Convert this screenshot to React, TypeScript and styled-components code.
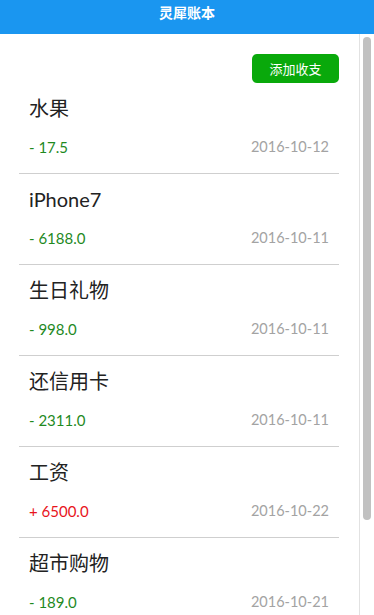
import * as React from 'react';
import styled, { createGlobalStyle } from 'styled-components';

interface IRecord {
    title: string;
    type: 'in' | 'out';
    amount: string;
    date: string;
}

const records: IRecord[] = [
    { title: '水果', type: 'out', amount: '17.5', date: '2016-10-12' },
    { title: 'iPhone7', type: 'out', amount: '6188.0', date: '2016-10-11' },
    { title: '生日礼物', type: 'out', amount: '998.0', date: '2016-10-11' },
    { title: '还信用卡', type: 'out', amount: '2311.0', date: '2016-10-11' },
    { title: '工资', type: 'in', amount: '6500.0', date: '2016-10-22' },
    { title: '超市购物', type: 'out', amount: '189.0', date: '2016-10-21' },
    { title: '房租', type: 'out', amount: '2000.0', date: '2016-10-20' },
];

const GlobalStyle = createGlobalStyle`
    html, body {
        margin: 0;
        padding: 0;
        background: #fff;
    }
    body {
        font-family: Lato, "Noto Sans", "Noto Sans CJK SC", sans-serif;
    }
`;

const Page = styled.div`
    width: 374px;
    height: 615px;
    display: flex;
    flex-direction: column;
    overflow: hidden;
`;

const Header = styled.header`
    height: 34px;
    flex: none;
    background: #1a96f0;
    color: #fff;
    font-family: "Noto Sans CJK SC", sans-serif;
    font-size: 14px;
    font-weight: 700;
    line-height: 24px;
    text-align: center;
    padding-bottom: 10px;
    box-sizing: border-box;
`;

const Body = styled.div`
    flex: 1;
    min-height: 0;
    display: flex;
`;

const Scroller = styled.main`
    flex: 1;
    overflow-y: auto;
    background: #fff;
    scrollbar-width: none;

    &::-webkit-scrollbar {
        display: none;
    }
`;

const ScrollTrack = styled.div`
    width: 8px;
    flex: none;
    border-left: 1px solid #e2e2e2;
    padding: 3px 3px 0 3px;
    background: #fff;
`;

const ScrollThumb = styled.div`
    width: 8px;
    height: 483px;
    border-radius: 4px;
    background: #c1c1c1;
`;

const Content = styled.div`
    padding: 20px 20px 4px 19px;
`;

const Toolbar = styled.div`
    display: flex;
    justify-content: flex-end;
`;

const AddButton = styled.button`
    width: 87px;
    height: 29px;
    border: none;
    border-radius: 5px;
    background: #09a90b;
    color: #fff;
    font-family: "Noto Sans CJK SC", sans-serif;
    font-size: 13px;
    padding: 0;
    cursor: pointer;
`;

const List = styled.ul`
    list-style: none;
    margin: 0;
    padding: 0;
`;

const Item = styled.li`
    padding: 14px 10px 16px;
    border-bottom: 1px solid #cfcfcf;

    &:last-child {
        border-bottom: none;
    }
`;

const Title = styled.div`
    font-size: 20px;
    line-height: 22px;
    color: #222;
    font-family: Lato, "Noto Sans CJK SC", sans-serif;
`;

const Meta = styled.div`
    margin-top: 18px;
    display: flex;
    justify-content: space-between;
    align-items: center;
    line-height: 20px;
`;

const Amount = styled.span<{ $income: boolean }>`
    font-size: 15px;
    color: ${p => (p.$income ? '#e8141c' : '#1f8a1f')};
`;

const DateText = styled.span`
    color: #a3a3a3;
    font-size: 14.5px;
`;

const App: React.FC = () => (
    <Page>
        <GlobalStyle />
        <Header>灵犀账本</Header>
        <Body>
            <Scroller>
                <Content>
                    <Toolbar>
                        <AddButton>添加收支</AddButton>
                    </Toolbar>
                    <List>
                        {records.map((r, idx) => (
                            <Item key={idx}>
                                <Title>{r.title}</Title>
                                <Meta>
                                    <Amount $income={r.type === 'in'}>
                                        {(r.type === 'in' ? '+ ' : '- ') + r.amount}
                                    </Amount>
                                    <DateText>{r.date}</DateText>
                                </Meta>
                            </Item>
                        ))}
                    </List>
                </Content>
            </Scroller>
            <ScrollTrack>
                <ScrollThumb />
            </ScrollTrack>
        </Body>
    </Page>
);

export default App;
